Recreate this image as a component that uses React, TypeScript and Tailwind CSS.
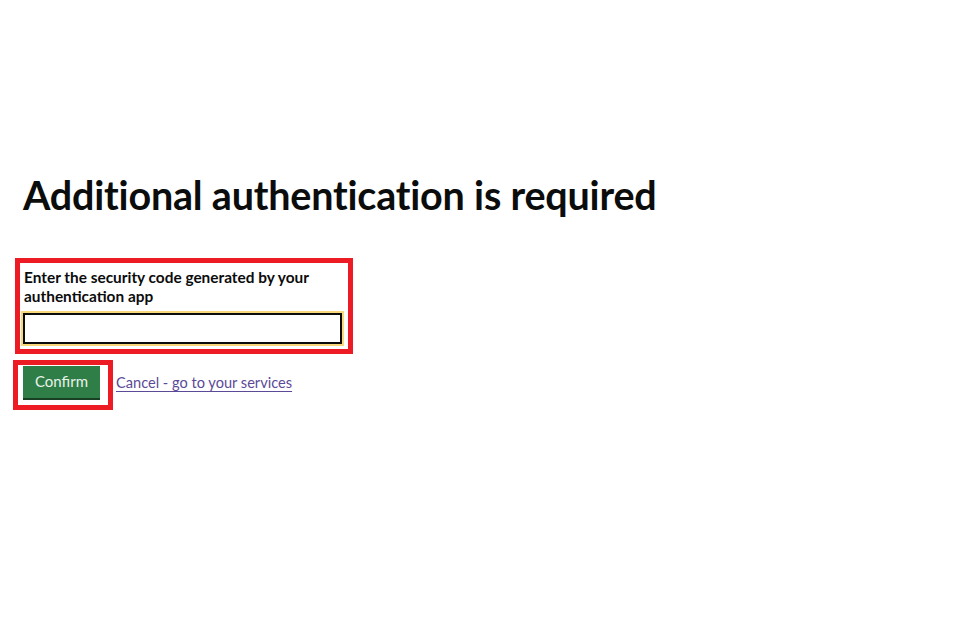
const FONT = "font-['Lato','Liberation_Sans',sans-serif]";

export default function App() {
  return (
    <div className={`min-h-[640px] w-[960px] bg-white text-[#0b0c0c] ${FONT}`}>
      <div className="pl-[13px] pt-[171px]">
        <h1 className="ml-[10px] text-[39.5px] font-bold leading-[48px] tracking-[-0.2px]">
          Additional authentication is required
        </h1>

        <div className="mt-[39px] ml-[2px] h-[96px] w-[338px] border-[5px] border-[#ed1c24] pt-[5px] pl-[3px]">
          <label
            htmlFor="code"
            className="block pl-px text-[15.4px] font-bold leading-[19px]"
          >
            Enter the security code generated by your
            <br />
            authentication app
          </label>
          <input
            id="code"
            type="text"
            className="mt-[7px] block h-[31px] w-[319px] border-2 border-[#0b0c0c] bg-white shadow-[0_0_0_2px_#f8d87a] outline-none"
          />
        </div>

        <div className="mt-[6px] flex items-center gap-[3px]">
          <div className="h-[50px] w-[100px] border-[5px] border-[#ed1c24] pt-[1px] pl-[5px]">
            <button
              type="button"
              className="h-[32px] w-[77px] bg-[#2f7d47] pb-[1px] text-[15px] leading-none text-[#e8f3ea] shadow-[0_2px_0_#173f24]"
            >
              Confirm
            </button>
          </div>
          <a
            href="#"
            className="-mt-[5px] text-[14.6px] text-[#5b4a97] underline decoration-1 underline-offset-[3px]"
          >
            Cancel - go to your services
          </a>
        </div>
      </div>
    </div>
  );
}
